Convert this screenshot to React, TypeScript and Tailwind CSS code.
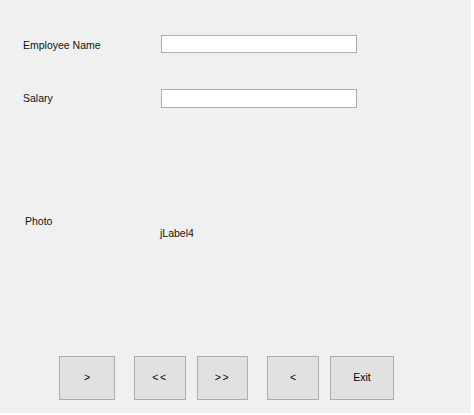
import React from 'react';

const NavButton: React.FC<{ label: string; width: string; spaced?: boolean }> = ({ label, width, spaced }) => (
  <button
    type="button"
    className={`${width} h-[44px] bg-[#e1e1e1] border border-[#adadad] text-[10.5px] text-black ${spaced ? 'tracking-[1.5px]' : ''}`}
  >
    {label}
  </button>
);

const App: React.FC = () => {
  return (
    <div className="w-[474px] h-[415px] bg-white">
      <div
        className="w-[471px] h-[413px] bg-[#f0f0f0] pt-[35px] pl-[23px] text-[10.5px] text-[#111]"
        style={{ fontFamily: '"Liberation Sans", Arial, sans-serif' }}
      >
        {/* Employee Name */}
        <div className="flex items-center h-[18px]">
          <span className="w-[138px] pt-[4px]">Employee Name</span>
          <input
            type="text"
            className="w-[196px] h-[18px] bg-white border border-[#abadb3] outline-none"
          />
        </div>

        {/* Salary */}
        <div className="flex items-center h-[19px] mt-[36px]">
          <span className="w-[138px] pt-[1px]">Salary</span>
          <input
            type="text"
            className="w-[196px] h-[19px] bg-white border border-[#abadb3] outline-none"
          />
        </div>

        {/* Photo */}
        <div className="flex mt-[107px] ml-[2px] h-[30px]">
          <span className="w-[135px] leading-[13px]">Photo</span>
          <span className="mt-[12px] leading-[13px]">jLabel4</span>
        </div>

        {/* Buttons */}
        <div className="flex mt-[111px] ml-[36px]">
          <NavButton label=">" width="w-[56px]" />
          <div className="ml-[19px] flex">
            <NavButton label="<<" width="w-[52px]" spaced />
            <div className="ml-[11px]">
              <NavButton label=">>" width="w-[51px]" spaced />
            </div>
          </div>
          <div className="ml-[19px] flex">
            <NavButton label="<" width="w-[52px]" />
            <div className="ml-[11px]">
              <NavButton label="Exit" width="w-[64px]" />
            </div>
          </div>
        </div>
      </div>
    </div>
  );
};

export default App;
